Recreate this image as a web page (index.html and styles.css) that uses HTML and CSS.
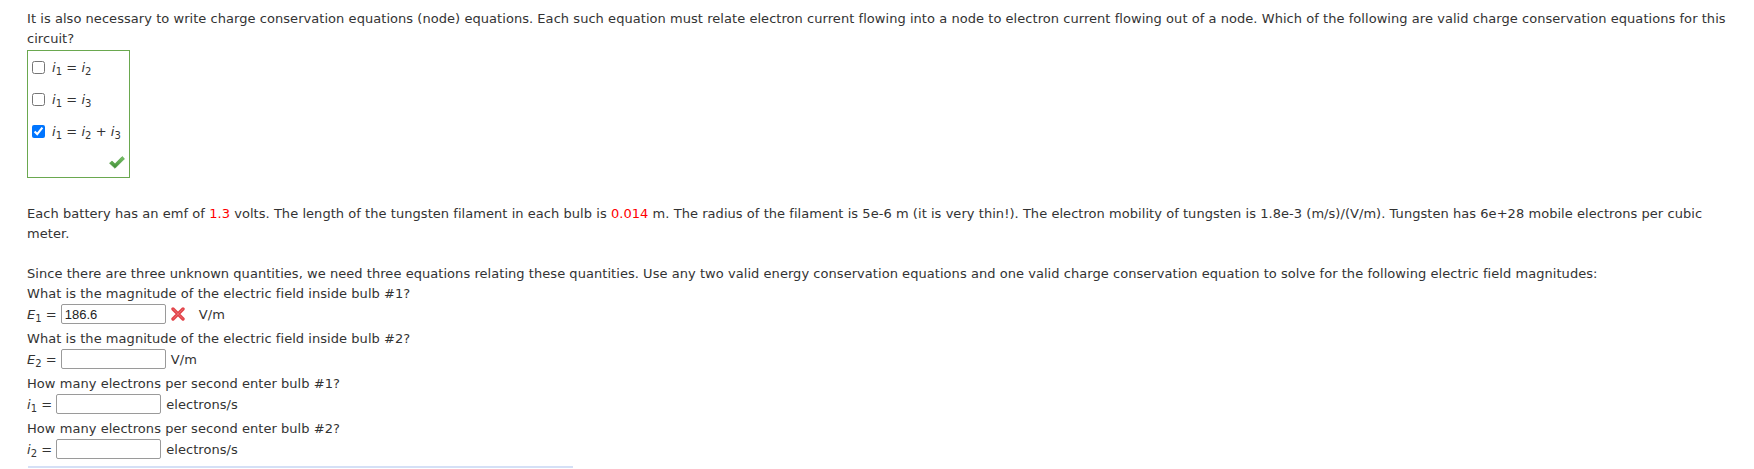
FILE: index.html
```html
<!DOCTYPE html>
<html lang="en">
<head>
<meta charset="utf-8">
<title>Charge conservation</title>
<link rel="stylesheet" href="styles.css">
</head>
<body>
<div class="page">
  <div class="text">It is also necessary to write charge conservation equations (node) equations. Each such equation must relate electron current flowing into a node to electron current flowing out of a node. Which of the following are valid charge conservation equations for this circuit?</div>

  <div class="choices">
    <label class="opt"><input type="checkbox"><span class="m"><i>i</i><sub>1</sub> = <i>i</i><sub>2</sub></span></label>
    <label class="opt"><input type="checkbox"><span class="m"><i>i</i><sub>1</sub> = <i>i</i><sub>3</sub></span></label>
    <label class="opt"><input type="checkbox" checked><span class="m"><i>i</i><sub>1</sub> = <i>i</i><sub>2</sub> + <i>i</i><sub>3</sub></span></label>
    <div class="mark">
      <svg width="16" height="13" viewBox="0 0 16 13">
        <defs>
          <linearGradient id="g" x1="0" y1="0" x2="0" y2="1">
            <stop offset="0" stop-color="#7cc46a"/>
            <stop offset="1" stop-color="#3d8b34"/>
          </linearGradient>
        </defs>
        <path d="M0.5 7.2 L3 5 L6 7.8 L13.2 0.6 L15.5 2.8 L6 12.3 Z" fill="url(#g)" stroke="#4b9a3e" stroke-width="0.6"/>
      </svg>
    </div>
  </div>

  <div class="text para">Each battery has an emf of <span class="red">1.3</span> volts. The length of the tungsten filament in each bulb is <span class="red">0.014</span> m. The radius of the filament is 5e-6 m (it is very thin!). The electron mobility of tungsten is 1.8e-3 (m/s)/(V/m). Tungsten has 6e+28 mobile electrons per cubic meter.</div>

  <div class="text para2">Since there are three unknown quantities, we need three equations relating these quantities. Use any two valid energy conservation equations and one valid charge conservation equation to solve for the following electric field magnitudes:</div>

  <div class="q">
    <div class="text">What is the magnitude of the electric field inside bulb #1?</div>
    <div class="ans">
      <span class="m lbl"><i>E</i><sub>1</sub> =</span>
      <input class="box" type="text" value="186.6">
      <svg class="x" width="14" height="14" viewBox="0 0 14 14">
        <path d="M2 2 L12 12 M12 2 L2 12" stroke="#e2444a" stroke-width="3.4" stroke-linecap="round"/>
        <path d="M2.6 2.4 L11.6 11.4 M11.6 2.4 L2.6 11.4" stroke="#f07a7e" stroke-width="1" stroke-linecap="round" opacity="0.7"/>
      </svg>
      <span class="unit wide">V/m</span>
    </div>
  </div>

  <div class="q">
    <div class="text">What is the magnitude of the electric field inside bulb #2?</div>
    <div class="ans">
      <span class="m lbl"><i>E</i><sub>2</sub> =</span>
      <input class="box" type="text" value="">
      <span class="unit">V/m</span>
    </div>
  </div>

  <div class="q">
    <div class="text">How many electrons per second enter bulb #1?</div>
    <div class="ans">
      <span class="m lbl"><i>i</i><sub>1</sub> =</span>
      <input class="box" type="text" value="">
      <span class="unit">electrons/s</span>
    </div>
  </div>

  <div class="q">
    <div class="text">How many electrons per second enter bulb #2?</div>
    <div class="ans">
      <span class="m lbl"><i>i</i><sub>2</sub> =</span>
      <input class="box" type="text" value="">
      <span class="unit">electrons/s</span>
    </div>
  </div>

  <div class="divider"></div>
</div>
</body>
</html>
```

FILE: styles.css
```css
html, body {
  margin: 0;
  padding: 0;
  background: #ffffff;
}

body {
  font-family: "DejaVu Sans", Verdana, sans-serif;
  font-size: 13px;
  letter-spacing: 0.05px;
  color: #333333;
}

.page {
  padding: 9px 14px 0 27px;
}

.text {
  line-height: 20px;
}

.red {
  color: #ff0000;
}

.m i {
  font-style: italic;
}

.m sub {
  font-size: 10px;
  vertical-align: -3px;
  line-height: 0;
}

.choices {
  width: 97px;
  border: 1px solid #6aa84f;
  margin-top: 1px;
  padding: 0 0 0 4px;
  box-sizing: content-box;
}

.opt {
  display: flex;
  align-items: center;
  gap: 7px;
  height: 32px;
}

.opt input {
  margin: 0;
  width: 13px;
  height: 13px;
}

.mark {
  height: 30px;
  display: flex;
  justify-content: flex-end;
  align-items: center;
  padding-right: 4px;
}

.para {
  margin-top: 26px;
}

.para2 {
  margin-top: 20px;
}

.q {
  margin-bottom: 5px;
}

.ans {
  display: flex;
  align-items: center;
  height: 20px;
}

.lbl {
  margin-right: 4px;
}

.box {
  box-sizing: border-box;
  width: 105px;
  height: 20px;
  margin: 0;
  padding: 0 3px;
  border: 1px solid #9a9a9a;
  border-radius: 2px;
  font-family: "Liberation Sans", Arial, sans-serif;
  font-size: 13px;
  letter-spacing: 0;
  color: #222;
  background: #fff;
}

.x {
  margin-left: 5px;
}

.unit {
  margin-left: 5px;
}

.unit.wide {
  margin-left: 14px;
}

.divider {
  width: 545px;
  margin-left: 1px;
  margin-top: 7px;
  border-top: 2px solid #d5e0f6;
}
```
